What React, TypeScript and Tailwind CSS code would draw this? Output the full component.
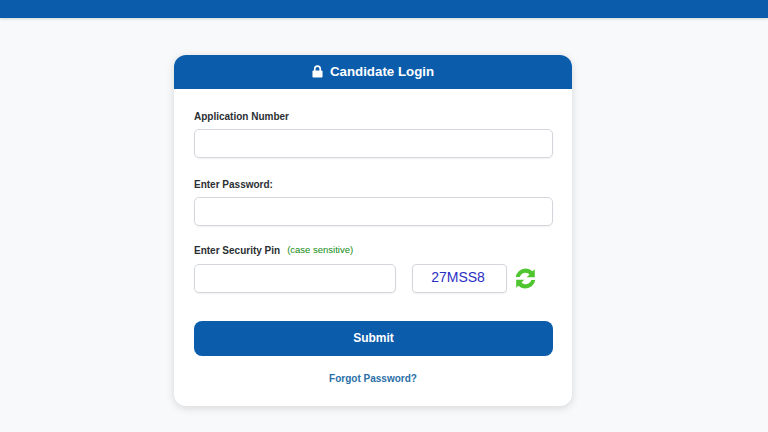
import React from "react";

const inputCls =
  "block h-[29px] rounded-[5px] border border-[#d3d7dc] bg-white shadow-[0_1px_2px_rgba(0,0,0,0.06)] outline-none";

function LockIcon() {
  return (
    <svg viewBox="0 0 12 14" className="w-[11px] h-[13px] -mt-[1px]">
      <path d="M3 6.5V4.2a3 3 0 0 1 6 0v2.3" fill="none" stroke="white" strokeWidth="1.8" />
      <rect x="0.5" y="5.8" width="11" height="7.7" rx="1.3" fill="white" />
    </svg>
  );
}

function RefreshIcon() {
  return (
    <svg viewBox="0 0 24 24" className="w-[23px] h-[23px] ml-[7px]">
      <path
        d="M12 1.5a10.5 10.5 0 0 1 7.4 3l2.3-2.2v8.4h-8.4l2.9-2.9A6.2 6.2 0 0 0 6 10.5H1.8A10.5 10.5 0 0 1 12 1.5z"
        fill="#4fc62f"
      />
      <path
        d="M12 22.5a10.5 10.5 0 0 1-7.4-3l-2.3 2.2v-8.4h8.4l-2.9 2.9A6.2 6.2 0 0 0 18 13.5h4.2A10.5 10.5 0 0 1 12 22.5z"
        fill="#4fc62f"
      />
    </svg>
  );
}

export default function App() {
  return (
    <div className="w-[768px] h-[432px] overflow-hidden bg-[#f7f9fb] font-['Liberation_Sans',Arial,sans-serif]">
      {/* Top bar */}
      <div className="h-[18px] bg-[#0b5cab] shadow-[0_1px_3px_rgba(0,0,0,0.15)]" />

      {/* Card */}
      <div className="ml-[174px] mt-[37px] w-[398px] h-[351px] rounded-[12px] bg-white shadow-[0_2px_8px_rgba(0,0,0,0.14)] overflow-hidden">
        <div className="h-[34px] bg-[#0b5cab] flex items-center justify-center gap-[7px] text-white">
          <LockIcon />
          <h2 className="text-[13.3px] font-bold">Candidate Login</h2>
        </div>

        <div className="px-[20px] pt-[21px]">
          <label className="block text-[10px] leading-[14px] font-bold text-[#2b2f33]">
            Application Number
          </label>
          <input className={`${inputCls} w-[359px] mt-[5px]`} />

          <label className="block mt-[20px] text-[10px] leading-[14px] font-bold text-[#2b2f33]">
            Enter Password:
          </label>
          <input className={`${inputCls} w-[359px] mt-[5px]`} />

          <div className="mt-[18px] flex items-center h-[14px] gap-[7px]">
            <label className="text-[10px] leading-[14px] font-bold text-[#2b2f33]">
              Enter Security Pin
            </label>
            <span className="text-[9.5px] text-[#128a12] -mt-[1px]">(case sensitive)</span>
          </div>

          <div className="flex items-center mt-[6px]">
            <input className={`${inputCls} w-[202px]`} />
            <div className="ml-[16px] w-[95px] h-[29px] pb-[2px] pr-[3px] rounded-[4px] border border-[#d3d7dc] bg-white flex items-center justify-center text-[14px] text-[#2a2fc4] shadow-[0_1px_2px_rgba(0,0,0,0.06)]">
              27MSS8
            </div>
            <RefreshIcon />
          </div>

          <button className="block w-[359px] h-[35px] mt-[28px] pb-[1px] rounded-[8px] bg-[#0b5cab] text-white text-[12px] font-bold">
            Submit
          </button>

          <div className="mt-[16px] text-center text-[10px] leading-[14px] font-bold text-[#2a6fa8]">
            Forgot Password?
          </div>
        </div>
      </div>
    </div>
  );
}
